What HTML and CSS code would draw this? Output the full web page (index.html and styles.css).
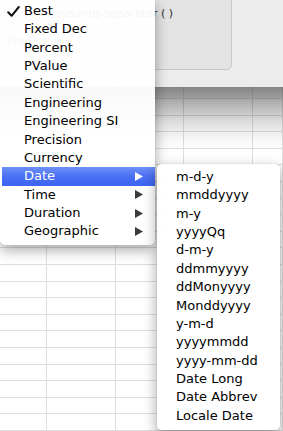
FILE: index.html
```html
<!DOCTYPE html>
<html>
<head>
<meta charset="utf-8">
<link rel="stylesheet" href="styles.css">
</head>
<body>
<div class="window">
  <div class="sheet">
    <div class="groupbox">
      <div class="popup">Properties ▾</div>
      <div class="sep-label">thousands separator ( )</div>
    </div>
  </div>
  <div class="grid">
    <div class="cell head"></div><div class="cell head"></div><div class="cell head"></div><div class="cell head"></div><div class="cell head"></div>
    <div class="cell"></div><div class="cell"></div><div class="cell"></div><div class="cell"></div><div class="cell"></div>
    <div class="cell"></div><div class="cell"></div><div class="cell"></div><div class="cell"></div><div class="cell"></div>
    <div class="cell"></div><div class="cell"></div><div class="cell"></div><div class="cell"></div><div class="cell"></div>
    <div class="cell"></div><div class="cell"></div><div class="cell"></div><div class="cell"></div><div class="cell"></div>
    <div class="cell"></div><div class="cell"></div><div class="cell"></div><div class="cell"></div><div class="cell"></div>
    <div class="cell"></div><div class="cell"></div><div class="cell"></div><div class="cell"></div><div class="cell"></div>
    <div class="cell"></div><div class="cell"></div><div class="cell"></div><div class="cell"></div><div class="cell"></div>
    <div class="cell"></div><div class="cell"></div><div class="cell"></div><div class="cell"></div><div class="cell"></div>
    <div class="cell"></div><div class="cell"></div><div class="cell"></div><div class="cell"></div><div class="cell"></div>
    <div class="cell"></div><div class="cell"></div><div class="cell"></div><div class="cell"></div><div class="cell"></div>
    <div class="cell"></div><div class="cell"></div><div class="cell"></div><div class="cell"></div><div class="cell"></div>
    <div class="cell"></div><div class="cell"></div><div class="cell"></div><div class="cell"></div><div class="cell"></div>
    <div class="cell"></div><div class="cell"></div><div class="cell"></div><div class="cell"></div><div class="cell"></div>
    <div class="cell"></div><div class="cell"></div><div class="cell"></div><div class="cell"></div><div class="cell"></div>
    <div class="cell"></div><div class="cell"></div><div class="cell"></div><div class="cell"></div><div class="cell"></div>
    <div class="cell"></div><div class="cell"></div><div class="cell"></div><div class="cell"></div><div class="cell"></div>
    <div class="cell"></div><div class="cell"></div><div class="cell"></div><div class="cell"></div><div class="cell"></div>
    <div class="cell"></div><div class="cell"></div><div class="cell"></div><div class="cell"></div><div class="cell"></div>
    <div class="cell"></div><div class="cell"></div><div class="cell"></div><div class="cell"></div><div class="cell"></div>
    <div class="cell"></div><div class="cell"></div><div class="cell"></div><div class="cell"></div><div class="cell"></div>
    <div class="shade"></div>
  </div>
</div>

<ul class="menu main-menu">
  <li class="item checked">
    <svg class="check" width="13" height="11" viewBox="0 0 13 11"><path d="M1.2 6.2 L4.6 9.8 L11.8 1" fill="none" stroke="#111" stroke-width="2" stroke-linecap="round" stroke-linejoin="round"/></svg>
    Best
  </li>
  <li class="item">Fixed Dec</li>
  <li class="item">Percent</li>
  <li class="item">PValue</li>
  <li class="item">Scientific</li>
  <li class="item">Engineering</li>
  <li class="item">Engineering SI</li>
  <li class="item">Precision</li>
  <li class="item">Currency</li>
  <li class="item has-sub active">Date<svg class="arrow" width="8" height="9" viewBox="0 0 8 9"><polygon points="0,0 8,4.5 0,9"/></svg></li>
  <li class="item has-sub">Time<svg class="arrow" width="8" height="9" viewBox="0 0 8 9"><polygon points="0,0 8,4.5 0,9"/></svg></li>
  <li class="item has-sub">Duration<svg class="arrow" width="8" height="9" viewBox="0 0 8 9"><polygon points="0,0 8,4.5 0,9"/></svg></li>
  <li class="item has-sub">Geographic<svg class="arrow" width="8" height="9" viewBox="0 0 8 9"><polygon points="0,0 8,4.5 0,9"/></svg></li>
</ul>

<ul class="menu sub-menu">
  <li class="item">m-d-y</li>
  <li class="item">mmddyyyy</li>
  <li class="item">m-y</li>
  <li class="item">yyyyQq</li>
  <li class="item">d-m-y</li>
  <li class="item">ddmmyyyy</li>
  <li class="item">ddMonyyyy</li>
  <li class="item">Monddyyyy</li>
  <li class="item">y-m-d</li>
  <li class="item">yyyymmdd</li>
  <li class="item">yyyy-mm-dd</li>
  <li class="item">Date Long</li>
  <li class="item">Date Abbrev</li>
  <li class="item">Locale Date</li>
</ul>
</body>
</html>
```

FILE: styles.css
```css
html, body {
  margin: 0;
  padding: 0;
}
body {
  width: 283px;
  height: 431px;
  overflow: hidden;
  position: relative;
  background: #ffffff;
  font-family: "DejaVu Sans", "Liberation Sans", sans-serif;
}

.window {
  display: flex;
  flex-direction: column;
  width: 283px;
  overflow: hidden;
}

.sheet {
  height: 87px;
  background: #ececec;
  display: flex;
  align-items: flex-start;
  padding-right: 51px;
  box-sizing: border-box;
}

.groupbox {
  flex: 1;
  height: 76px;
  margin-top: -6px;
  margin-left: -4px;
  background: #e3e3e3;
  border: 1px solid #c9c9c9;
  border-radius: 5px;
  box-sizing: border-box;
  display: flex;
  justify-content: space-between;
  align-items: flex-start;
  padding: 12px 58px 0 10px;
}

.popup {
  flex: none;
  width: 0;
  min-width: 0;
  margin-top: 28px;
  font-size: 11px;
  color: #555;
  white-space: nowrap;
}

.sep-label {
  font-size: 11px;
  color: #2a2a2a;
  white-space: nowrap;
}

.grid {
  position: relative;
  display: grid;
  grid-template-columns: 47px 68.5px 68.5px 68.5px 1fr;
  grid-template-rows: 12px repeat(21, 16.6px);
  background: #ffffff;
}

.cell {
  border-right: 1px solid #dedede;
  border-bottom: 1px solid #dedede;
}

.cell.head {
  background: #f4f4f4;
}

.shade {
  position: absolute;
  left: 0;
  right: 0;
  top: 0;
  height: 66px;
  background: linear-gradient(rgba(0,0,0,0.46), rgba(0,0,0,0.3) 25%, rgba(0,0,0,0.12) 55%, rgba(0,0,0,0.03) 80%, rgba(0,0,0,0));
  pointer-events: none;
}

.menu {
  list-style: none;
  margin: 0;
  position: absolute;
  background: rgba(255,255,255,0.95);
  font-size: 13px;
  color: #000;
  box-sizing: border-box;
}

.main-menu {
  left: 0;
  top: 0;
  width: 155px;
  padding: 1.8px 0 4px 0;
  border-radius: 0 0 5px 5px;
  box-shadow: 0 5px 14px rgba(0,0,0,0.35), 0 0 1px rgba(0,0,0,0.3);
}

.sub-menu {
  left: 157px;
  top: 164px;
  width: 123px;
  padding: 3.8px 0 5px 0;
  border-radius: 5px;
  box-shadow: 0 5px 14px rgba(0,0,0,0.38), 0 0 1px rgba(0,0,0,0.3);
}

.item {
  height: 18.4px;
  line-height: 18.4px;
  white-space: nowrap;
  position: relative;
  display: flex;
  align-items: center;
}

.main-menu .item {
  padding-left: 24px;
}

.sub-menu .item {
  padding-left: 19px;
}

.check {
  position: absolute;
  left: 7px;
  top: 4px;
}

.arrow {
  margin-left: auto;
  margin-right: 12px;
  fill: #3a3a3a;
}

.item.active {
  margin-left: 2px;
  padding-left: 22px;
  background: linear-gradient(#6e90f8, #4a70f4 50%, #3d63f1);
  color: #fff;
}

.item.active .arrow {
  fill: #fff;
}
```
